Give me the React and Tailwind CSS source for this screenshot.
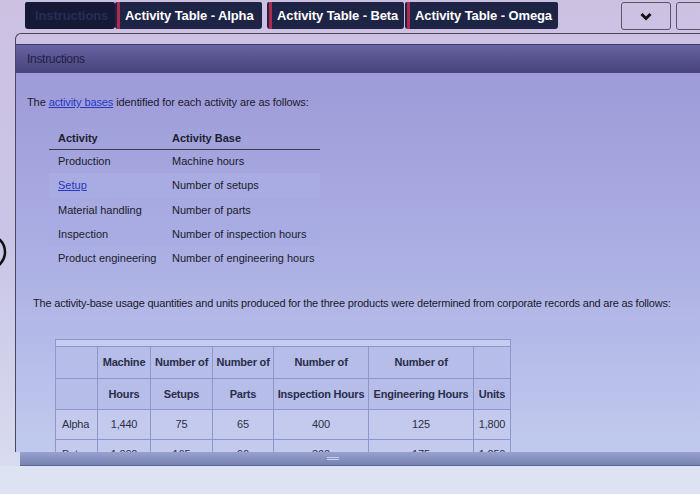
import React from "react";

const cols = [42, 53, 62, 61, 95, 105, 36];

function Cell({ w, children, className = "" }) {
  return (
    <div
      className={"flex items-center justify-center whitespace-nowrap border-r border-[#8d97cb] last:border-r-0 " + className}
      style={{ width: w }}
    >
      {children}
    </div>
  );
}

function DataRow({ cells, className = "", h, bold }) {
  return (
    <div className={"flex border-b border-[#8d97cb] " + className} style={{ height: h }}>
      {cells.map((c, i) => (
        <Cell key={i} w={cols[i]} className={(bold ? "font-bold text-[#2a2d48] " : "text-[#2e3045] ") + (i === 0 && !bold ? "justify-start pl-[6px]" : "")}>
          {c}
        </Cell>
      ))}
    </div>
  );
}

function Tab({ label, active, w, ml }) {
  return (
    <div
      className={
        "relative flex h-[27px] shrink-0 items-center whitespace-nowrap rounded-b-[3px] rounded-t-[2px] text-[13px] font-bold tracking-[-0.1px] " +
        (active ? "bg-[#1e2446] text-white pl-[10px]" : "bg-[#151935] text-[#252d55] pl-[10px]")
      }
      style={{ width: w, marginLeft: ml }}
    >
      {active && <div className="absolute left-[2px] top-0 h-full w-[3px] bg-[#b02a4c]" />}
      {label}
    </div>
  );
}

const activities = [
  ["Production", "Machine hours", false, 23],
  ["Setup", "Number of setups", true, 25],
  ["Material handling", "Number of parts", false, 24],
  ["Inspection", "Number of inspection hours", true, 24],
  ["Product engineering", "Number of engineering hours", false, 24],
];

export default function App() {
  return (
    <div className="relative h-[494px] w-[700px] overflow-hidden bg-gradient-to-b from-[#cdc1e2] via-[#c9c5e6] to-[#d9dff2] font-['Liberation_Sans',Arial,sans-serif]">
      {/* top bar */}
      <div className="flex h-[33px] items-start pt-[2px]">
        <Tab label="Instructions" w={90} ml={25} />
        <Tab label="Activity Table - Alpha" active w={147} ml={0} />
        <Tab label="Activity Table - Beta" active w={137} ml={5} />
        <Tab label="Activity Table - Omega" active w={153} ml={1} />
        <div className="ml-[63px] flex h-[28px] w-[50px] shrink-0 items-center justify-center rounded-[3px] border border-[#5a5668]">
          <svg width="12" height="9" viewBox="0 0 12 9">
            <path d="M1.5 2 L6 6.5 L10.5 2" fill="none" stroke="#111" strokeWidth="3" strokeLinejoin="miter" />
          </svg>
        </div>
        <div className="ml-[5px] h-[28px] w-[40px] shrink-0 rounded-[3px] border border-[#5a5668]" />
      </div>

      {/* panel */}
      <div className="ml-[15px] flex h-[419px] flex-col rounded-tl-[6px] border-l border-t border-[#4a4858] pt-[10px]">
        <div className="flex h-[29px] items-center border-t border-[#3b3768] bg-gradient-to-b from-[#6864a3] to-[#47427a] pl-[11px] text-[12px] tracking-[-0.3px] text-[#1f2046]">
          Instructions
        </div>
        <div className="flex-1 overflow-hidden bg-gradient-to-b from-[#9d9bd8] via-[#acb0e4] to-[#c1caee] pl-[11px] text-[11px] text-[#1b1b2c]">
          <p className="mt-[22px] leading-[14px] tracking-[-0.1px]">
            The{" "}
            <span className="text-[#2638c0] underline">activity bases</span>{" "}
            identified for each activity are as follows:
          </p>

          <div className="ml-[22px] mt-[19px] w-[271px]">
            <div className="flex h-[22px] items-center border-b-[1.5px] border-[#3a3a4c] font-bold text-[#1e1e30]">
              <div className="w-[116px] pl-[9px]">Activity</div>
              <div className="pl-[7px]">Activity Base</div>
            </div>
            {activities.map(([a, b, shaded, h], i) => (
              <div
                key={i}
                className={"flex items-center " + (shaded ? "bg-[#a9ace2]" : "")}
                style={{ height: h }}
              >
                <div className={"w-[116px] pl-[9px] " + (a === "Setup" ? "text-[#2638c0] underline" : "")}>
                  {a}
                </div>
                <div className="pl-[7px]">{b}</div>
              </div>
            ))}
          </div>

          <p className="ml-[6px] mt-[26px] whitespace-nowrap leading-[14px] tracking-[-0.2px]">
            The activity-base usage quantities and units produced for the three products were determined from corporate records and are as follows:
          </p>

          <div className="ml-[28px] mt-[29px] w-[456px] border border-[#8d97cb] text-[11px] tracking-[-0.2px]">
            <div className="h-[7px] border-b border-[#8d97cb] bg-[#c4ccef]" />
            <DataRow bold h={32} className="bg-[#b6bde9]" cells={["", "Machine", "Number of", "Number of", "Number of", "Number of", ""]} />
            <DataRow bold h={31} className="bg-[#b6bde9]" cells={["", "Hours", "Setups", "Parts", "Inspection Hours", "Engineering Hours", "Units"]} />
            <DataRow h={30} className="bg-[#c3caee]" cells={["Alpha", "1,440", "75", "65", "400", "125", "1,800"]} />
            <DataRow h={30} className="bg-[#c3caee]" cells={["Beta", "1,000", "165", "90", "300", "175", "1,250"]} />
          </div>
        </div>
      </div>

      {/* bottom bar */}
      <div className="relative ml-[20px] flex h-[14px] items-center justify-center border-b border-[#5d6796] bg-gradient-to-b from-[#98a2cf] to-[#7882b2]">
        <div className="ml-[-55px] flex flex-col gap-[1px]">
          <div className="h-[1px] w-[12px] bg-[#c9cfee]" />
          <div className="h-[1px] w-[12px] bg-[#c9cfee]" />
        </div>
      </div>
      <div className="h-[28px] bg-[#dde3f3]" />

      {/* left edge arc */}
      <svg className="absolute left-0 top-[230px]" width="8" height="44" viewBox="0 0 8 44">
        <circle cx="-12" cy="22" r="17" fill="none" stroke="#111" strokeWidth="2.5" />
      </svg>
    </div>
  );
}
